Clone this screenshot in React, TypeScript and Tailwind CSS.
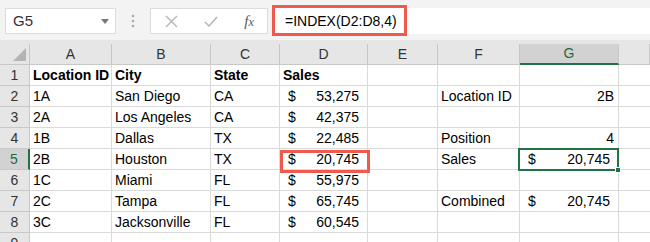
const letters = ['A', 'B', 'C', 'D', 'E', 'F', 'G', ''];

type Cell = { t?: string; bold?: boolean; right?: boolean; money?: string };

const rows: Cell[][] = [
  [{ t: 'Location ID', bold: true }, { t: 'City', bold: true }, { t: 'State', bold: true }, { t: 'Sales', bold: true }, {}, {}, {}],
  [{ t: '1A' }, { t: 'San Diego' }, { t: 'CA' }, { money: '53,275' }, {}, { t: 'Location ID' }, { t: '2B', right: true }],
  [{ t: '2A' }, { t: 'Los Angeles' }, { t: 'CA' }, { money: '42,375' }, {}, {}, {}],
  [{ t: '1B' }, { t: 'Dallas' }, { t: 'TX' }, { money: '22,485' }, {}, { t: 'Position' }, { t: '4', right: true }],
  [{ t: '2B' }, { t: 'Houston' }, { t: 'TX' }, { money: '20,745' }, {}, { t: 'Sales' }, { money: '20,745' }],
  [{ t: '1C' }, { t: 'Miami' }, { t: 'FL' }, { money: '55,975' }, {}, {}, {}],
  [{ t: '2C' }, { t: 'Tampa' }, { t: 'FL' }, { money: '65,745' }, {}, { t: 'Combined' }, { money: '20,745' }],
  [{ t: '3C' }, { t: 'Jacksonville' }, { t: 'FL' }, { money: '60,545' }, {}, {}, {}],
  [{}, {}, {}, {}, {}, {}, {}],
];

const gridCols = 'grid-cols-[30px_82px_99px_69px_88px_70px_82px_99px_1fr]';

const CellBox = ({ c, row, col }: { c: Cell; row: number; col: number }) => {
  const isSel = row === 5 && col === 6;
  const isRed = row === 5 && col === 3;
  return (
    <div className="relative h-[21px] border-r border-b border-[#dadada] bg-white text-[14px] leading-[20px] text-black">
      {c.money ? (
        <div className="flex h-full justify-between pl-[8px] pr-[8px]">
          <span>$</span>
          <span>{c.money}</span>
        </div>
      ) : c.t ? (
        <div className={`h-full whitespace-nowrap ${c.right ? 'pr-[4px] text-right' : 'pl-[3px]'} ${c.bold ? 'font-bold' : ''}`}>
          {c.t}
        </div>
      ) : null}
      {isSel && (
        <div className="absolute -top-[1px] -left-[2px] z-10 h-[23px] w-[101px] border-2 border-[#217346]">
          <div className="absolute -right-[4px] -bottom-[4px] h-[6px] w-[6px] border border-white bg-[#217346]" />
        </div>
      )}
      {isRed && (
        <div className="absolute top-[1px] left-0 z-10 h-[23px] w-[90px] border-[3px] border-[#f05a4c]" />
      )}
    </div>
  );
};

export default function App() {
  return (
    <div className="h-[242px] w-[650px] overflow-hidden bg-white" style={{ fontFamily: '"Liberation Sans", Arial, sans-serif' }}>
      {/* formula bar */}
      <div className="flex h-[40px] items-start bg-[#f3f3f3] pt-[8px]">
        <div className="ml-[5px] flex h-[26px] w-[111px] items-center justify-between border border-[#dcdcdc] bg-white pl-[7px] pr-[6px] text-[15px] text-[#333]">
          <span>G5</span>
          <svg width="8" height="5" viewBox="0 0 8 5">
            <path d="M0 0h8L4 5z" fill="#777" />
          </svg>
        </div>
        <div className="flex h-[26px] w-[34px] items-center justify-center">
          <svg width="4" height="14" viewBox="0 0 4 14">
            <circle cx="2" cy="2" r="1.3" fill="#aaa" />
            <circle cx="2" cy="7" r="1.3" fill="#aaa" />
            <circle cx="2" cy="12" r="1.3" fill="#aaa" />
          </svg>
        </div>
        <div className="flex h-[26px] w-[118px] items-center border border-[#dcdcdc] bg-white">
          <div className="flex w-[40px] justify-center">
            <svg width="13" height="13" viewBox="0 0 13 13">
              <path d="M1 1l11 11M12 1L1 12" stroke="#b5b5b5" strokeWidth="1.4" />
            </svg>
          </div>
          <div className="flex w-[40px] justify-center">
            <svg width="14" height="11" viewBox="0 0 14 11">
              <path d="M1 6l4 4 8-9" stroke="#b5b5b5" strokeWidth="1.5" fill="none" />
            </svg>
          </div>
          <div className="flex w-[36px] justify-center text-[15px] italic text-[#555]" style={{ fontFamily: '"Liberation Serif", serif' }}>
            <span>f<span className="text-[12px]">x</span></span>
          </div>
        </div>
        <div className="relative ml-[4px] flex h-[26px] flex-1 items-center bg-white pl-[13px] text-[14px] text-black">
          <span>=INDEX(D2:D8,4)</span>
          <div className="absolute -top-[3px] left-0 h-[31px] w-[135px] border-[3px] border-[#f05a4c]" />
        </div>
      </div>
      <div className="h-[4px] bg-[#e6e6e6]" />

      {/* sheet */}
      <div className={`grid ${gridCols}`}>
        <div className="relative h-[21px] border-r border-b border-[#c8c8c8] bg-[#e6e6e6]">
          <svg className="absolute right-[3px] bottom-[3px]" width="13" height="13" viewBox="0 0 13 13">
            <path d="M13 0v13H0z" fill="#b4b4b4" />
          </svg>
        </div>
        {letters.map((l, i) => (
          <div
            key={i}
            className={`flex h-[21px] items-center justify-center border-r border-[#c8c8c8] text-[14px] ${
              i === 6 ? 'border-b-2 border-b-[#217346] bg-[#d2d2d2] text-[#1e6b42]' : 'border-b border-b-[#c8c8c8] bg-[#e6e6e6] text-[#333]'
            }`}
          >
            {l}
          </div>
        ))}
        {rows.map((r, ri) => {
          const n = ri + 1;
          return [
            <div
              key={`h${n}`}
              className={`flex h-[21px] items-center justify-center border-b border-[#c8c8c8] text-[14px] ${
                n === 5 ? 'border-r-2 border-r-[#217346] bg-[#d2d2d2] text-[#1e6b42]' : 'border-r border-r-[#c8c8c8] bg-[#e6e6e6] text-[#333]'
              }`}
            >
              {n}
            </div>,
            ...r.map((c, ci) => <CellBox key={`${n}-${ci}`} c={c} row={n} col={ci} />),
            <div key={`x${n}`} className="h-[21px] border-b border-[#dadada] bg-white" />,
          ];
        })}
      </div>
    </div>
  );
}
